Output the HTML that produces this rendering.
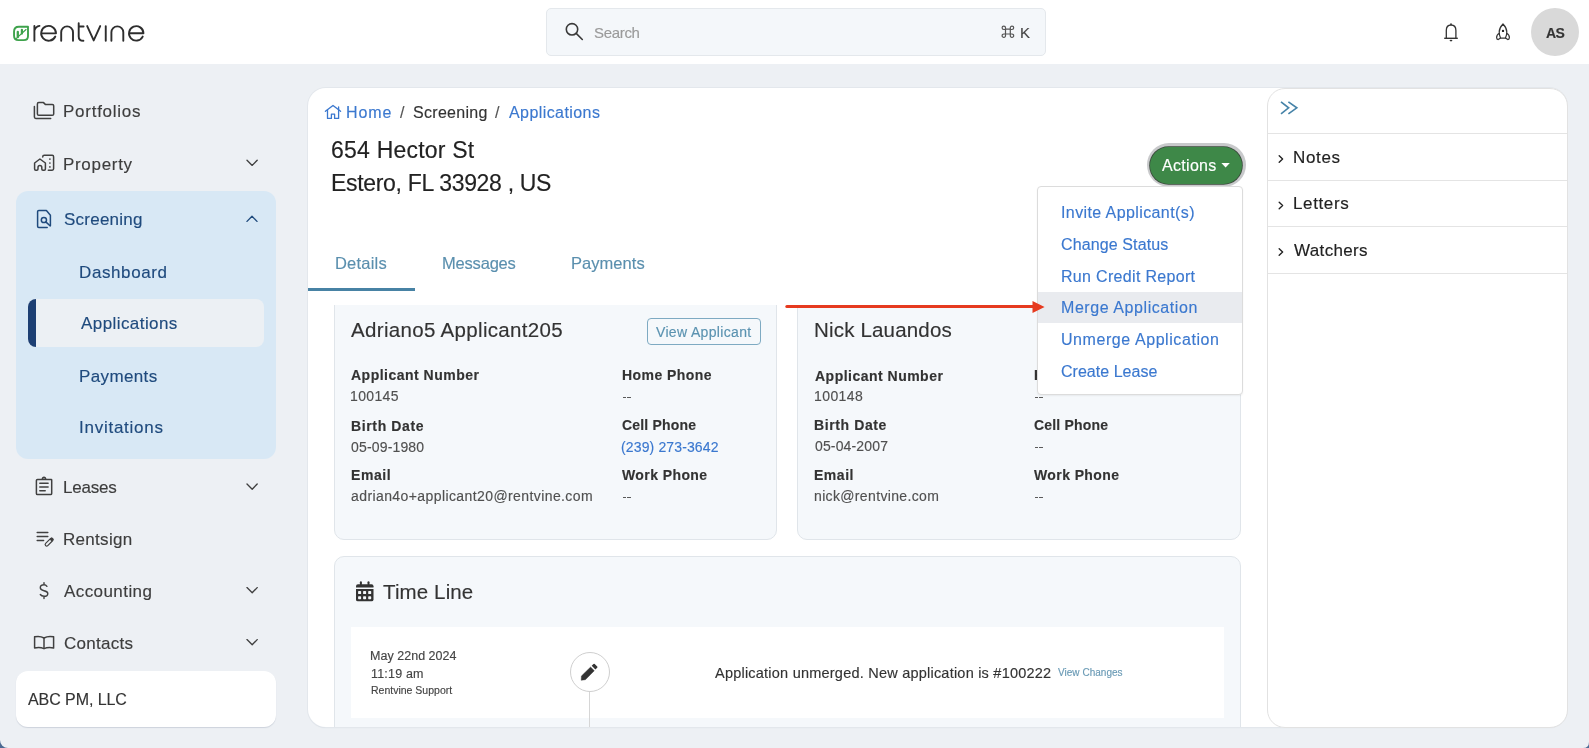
<!DOCTYPE html>
<html><head><meta charset="utf-8">
<style>
html,body{margin:0;padding:0;}
body{width:1589px;height:748px;position:relative;overflow:hidden;background:#edf0f4;font-family:"Liberation Sans",sans-serif;}
.t{position:absolute;white-space:nowrap;will-change:transform;-webkit-text-stroke:0.15px currentColor;font-family:"Liberation Sans",sans-serif;}
.a{position:absolute;}
svg.a{overflow:visible;}
</style></head><body>
<!-- header -->
<div class="a" style="left:0;top:0;width:1589px;height:64px;background:#fff;"></div>
<!-- logo -->
<svg class="a" style="left:0;top:0" width="160" height="64" viewBox="0 0 160 64">
  <g fill="none" stroke="#3ea24c" stroke-linejoin="round" stroke-linecap="round">
    <path d="M28 26.75 V35.9 Q28 40.15 23.75 40.15 H18.4 Q14.05 40.15 14.05 35.8 V31.6 Q14.05 26.75 18.9 26.75 Z" stroke-width="1.9"/>
    <path d="M15.6 39.2 L26 29.5" stroke-width="1.15"/>
    <path d="M17.8 32 V37.2" stroke-width="2.3"/>
    <path d="M21.9 29.8 V33.6" stroke-width="2.2"/>
  </g>
  <g fill="none" stroke="#2e2e2e" stroke-width="1.9" stroke-linecap="round" stroke-linejoin="round">
    <path d="M34.4 25.9 V40.7 M34.4 30.6 Q35.6 26.4 39.5 25.9"/>
    <path d="M41.2 33.35 H56 A7.4 7.4 0 1 0 55.3 36.5"/>
    <path d="M61.2 40.7 V32.3 A5.9 5.9 0 0 1 73 32.3 V40.7"/>
    <path d="M78.7 23.3 V36.4 Q78.7 40.7 83.4 40.7 M78.7 26.5 H83.6"/>
    <path d="M87.2 26.1 L93.7 40.4 L100.2 26.1"/>
    <path d="M105.75 26.1 V40.7"/>
    <path d="M111.4 40.7 V32.35 A5.95 5.95 0 0 1 123.3 32.35 V40.7"/>
    <path d="M129.05 33.3 H143.45 A7.2 7.2 0 1 0 142.7 36.6"/>
  </g>
</svg>
<!-- search box -->
<div class="a" style="left:546px;top:8px;width:498px;height:46px;background:#f4f7fa;border:1px solid #e4e8ec;border-radius:5px;"></div>
<svg class="a" style="left:0;top:0" width="600" height="64">
  <circle cx="572" cy="29.3" r="5.7" fill="none" stroke="#3a3a3a" stroke-width="1.6"/>
  <path d="M576.2 33.4 L582.3 39.5" stroke="#3a3a3a" stroke-width="1.6" stroke-linecap="round"/>
</svg>
<svg class="a" style="left:1000px;top:24px" width="16" height="16" viewBox="0 0 16 16">
  <g fill="none" stroke="#555" stroke-width="1.2">
  <path d="M5.5 5.2 H10.3 V10 H5.5 Z"/>
  <path d="M5.5 5.2 V3.8 A1.7 1.7 0 1 0 3.8 5.5 H5.5"/>
  <path d="M10.3 5.2 V3.8 A1.7 1.7 0 1 1 12 5.5 H10.3"/>
  <path d="M5.5 10 V11.6 A1.7 1.7 0 1 1 3.8 10 H5.5"/>
  <path d="M10.3 10 V11.6 A1.7 1.7 0 1 0 12 10 H10.3"/>
  </g>
</svg>
<!-- bell / rocket -->
<svg class="a" style="left:1430px;top:15px" width="100" height="35" viewBox="1430 15 100 35">
  <g fill="none" stroke="#333" stroke-width="1.3" stroke-linejoin="round">
    <path d="M1446.3 38 V30.5 Q1446.3 25 1451 25 Q1455.9 25 1455.9 30.5 V38"/>
    <path d="M1444.2 38.3 H1457.8" stroke-width="1.4"/>
  </g>
  <circle cx="1451" cy="24.2" r="0.9" fill="#333"/>
  <ellipse cx="1451" cy="40.6" rx="1.4" ry="0.8" fill="#333"/>
  <g fill="none" stroke="#333" stroke-width="1.2" stroke-linejoin="round">
    <path d="M1503 24 Q1506.8 28 1506.8 32 Q1506.8 35.5 1505.4 38.1 H1500.6 Q1499.2 35.5 1499.2 32 Q1499.2 28 1503 24 Z"/>
    <path d="M1499.5 33.2 Q1496.6 34.5 1496.6 37.5 Q1496.6 39.5 1498.2 39.6 L1500.6 38.1"/>
    <path d="M1506.5 33.2 Q1509.4 34.5 1509.4 37.5 Q1509.4 39.5 1507.8 39.6 L1505.4 38.1"/>
  </g>
  <circle cx="1503" cy="30.9" r="1.2" fill="#222"/>
</svg>
<div class="a" style="left:1531px;top:8px;width:48px;height:48px;border-radius:50%;background:#d9d9d9;"></div>

<!-- sidebar -->
<div class="a" style="left:16px;top:191px;width:260px;height:268px;background:#d8e8f5;border-radius:12px;"></div>
<div class="a" style="left:28px;top:299px;width:236px;height:48px;background:#ecf0f4;border-radius:8px;overflow:hidden;"><div class="a" style="left:0;top:0;width:8px;height:48px;background:#1d3f73;"></div></div>
<div class="a" style="left:16px;top:671px;width:260px;height:56px;background:#fff;border-radius:12px;box-shadow:0 1px 1px rgba(60,80,110,0.18);"></div>
<svg class="a" style="left:0;top:64px" width="300" height="684" viewBox="0 64 300 684">
  <g fill="none" stroke="#404040" stroke-width="1.5" stroke-linecap="round" stroke-linejoin="round">
    <!-- folder -->
    <path d="M37.4 104 Q37.4 102.6 38.8 102.6 H43.5 L45.3 104.4 H52.3 Q53.7 104.4 53.7 105.8 V113.9 Q53.7 115.3 52.3 115.3 H38.8 Q37.4 115.3 37.4 113.9 Z"/>
    <path d="M34.4 106.5 V117 Q34.4 118.4 35.8 118.4 H50.7"/>
    <!-- property -->
    <path d="M34.6 169 V163 L39.9 159 L45.4 163 V169 Q45.4 170.2 44.2 170.2 H43 Q41.8 170.2 41.8 169 V167.4 Q41.8 165.6 39.9 165.6 Q38 165.6 38 167.4 V169 Q38 170.2 36.8 170.2 H35.8 Q34.6 170.2 34.6 169 Z"/>
    <path d="M42.7 157 Q42.7 155.3 44.3 155.3 H52.2 Q53.6 155.3 53.6 156.7 V168.8 Q53.6 170.2 52.2 170.2 H48.3"/>
    <!-- leases clipboard -->
    <path d="M37.9 479.4 H51.2 Q51.7 479.4 51.7 480 V493.4 Q51.7 494.5 50.6 494.5 H37.5 Q36.4 494.5 36.4 493.4 V480.5 Q36.4 479.4 37.5 479.4 H42.3 Q42.5 477.2 44 477.2 Q45.5 477.2 45.7 479.4"/>
    <path d="M39.8 483.2 H48.1 M39.8 487 H48.1 M39.8 490.7 H45.2"/>
    <!-- rentsign -->
    <path d="M37.2 532.4 H47.8 M37.2 536.5 H47.8 M37.2 540.4 H43.6"/>
    <g transform="translate(49.1,542.1) rotate(-45)"><rect x="-4.9" y="-1.5" width="9.8" height="3" rx="1.5" stroke-width="1.2"/></g>
    <path d="M44 582.6 V584.8 M44 596.3 V598.6 M46.9 586.3 Q45.9 584.8 44 584.8 Q40.3 584.8 40.3 587.8 Q40.3 589.8 44 590.7 Q47.8 591.6 47.8 593.4 Q47.8 596.3 44 596.3 Q41.5 596.3 40.3 594.5" stroke-width="1.4"/>
    <!-- book -->
    <path d="M44 638 Q40 635.6 34.6 636.8 V648 Q40 647 44 648.6 Q48 647 53.6 648 V636.8 Q48 635.6 44 638 Z"/>
    <path d="M44 638 V648.4"/>
    <!-- chevrons -->
    <g stroke-width="1.35"><path d="M247 160.2 L252.2 165.4 L257.2 160.2"/>
    <path d="M247 484 L252.2 489.2 L257.2 484"/>
    <path d="M247 587.6 L252.2 592.8 L257.2 587.6"/>
    <path d="M247 639.6 L252.2 644.8 L257.2 639.6"/></g>
  </g>
  <g transform="translate(49.1,542.1) rotate(-45)"><rect x="2.2" y="-1.6" width="3.2" height="3.2" rx="1.2" fill="#404040"/></g>
  <g fill="#404040"><circle cx="49.9" cy="159.1" r="0.85"/><circle cx="49.9" cy="163" r="0.85"/><circle cx="49.9" cy="166.9" r="0.85"/></g>
  <g fill="none" stroke="#1f4a7d" stroke-width="1.5" stroke-linecap="round" stroke-linejoin="round">
    <path d="M47.2 227.4 H38.8 Q37.6 227.4 37.6 226.2 V211.6 Q37.6 210.4 38.8 210.4 H46.4 L50.4 215.2 V225.8"/>
    <circle cx="43.9" cy="220" r="2.6"/>
    <path d="M45.8 221.9 L50 225.8"/>
    <path d="M247 221.4 L252 216.2 L257 221.4" stroke-width="1.35"/>
  </g>
  
</svg>

<!-- main white container -->
<div class="a" style="left:308px;top:88px;width:1259px;height:639px;background:#fff;border-radius:18px;box-shadow:0 0 0 1px #e3e7ec, 0 1px 1px rgba(60,80,110,0.15);"></div>
<!-- breadcrumb home icon -->
<svg class="a" style="left:320px;top:100px" width="24" height="24" viewBox="320 100 24 24">
  <g fill="none" stroke="#3b78cf" stroke-width="1.3" stroke-linejoin="round" stroke-linecap="round">
    <path d="M325.4 111.3 L333 105.4 L340.6 111.3"/>
    <path d="M327.5 109.8 V118.4 H331.4 V114.2 H334.6 V118.4 H338.6 V109.8"/>
    <path d="M338.6 107 V109.6"/>
  </g>
</svg>
<!-- tab underline -->
<div class="a" style="left:308px;top:287.5px;width:107px;height:3px;background:#4782a4;"></div>

<!-- content clip -->
<div class="a" style="left:308px;top:305px;width:959px;height:422px;overflow:hidden;">
  <div class="a" style="left:26px;top:-20px;width:441px;height:253px;background:#f5f8fb;border:1px solid #e0e5ea;border-radius:10px;"></div>
  <div class="a" style="left:489px;top:-20px;width:442px;height:253px;background:#f5f8fb;border:1px solid #e0e5ea;border-radius:10px;"></div>
  <div class="a" style="left:338.5px;top:12.5px;width:112px;height:25px;border:1.5px solid #7eaac2;border-radius:4px;"></div>
  <div class="a" style="left:26px;top:250.5px;width:905px;height:200px;background:#f5f8fb;border:1px solid #e0e5ea;border-radius:10px;"></div>
  <div class="a" style="left:43px;top:322px;width:873px;height:91px;background:#fff;"></div>
</div>
<!-- calendar icon -->
<svg class="a" style="left:350px;top:576px" width="30" height="30" viewBox="350 576 30 30">
  <g fill="#333">
    <path d="M356 587.6 V586.2 Q356 584.2 358 584.2 H371.5 Q373.5 584.2 373.5 586.2 V587.6 Z"/>
    <path d="M356 589 H373.5 V599.4 Q373.5 601.3 371.6 601.3 H357.9 Q356 601.3 356 599.4 Z"/>
    <rect x="359.9" y="581.2" width="2" height="4" rx="1"/>
    <rect x="367.5" y="581.2" width="2" height="4" rx="1"/>
  </g>
  <g fill="#f5f8fb">
    <rect x="358.1" y="591.1" width="3" height="3" rx="0.7"/><rect x="363.1" y="591.1" width="3" height="3" rx="0.7"/><rect x="368.2" y="591.1" width="3" height="3" rx="0.7"/>
    <rect x="358.1" y="596.2" width="3" height="3" rx="0.7"/><rect x="363.1" y="596.2" width="3" height="3" rx="0.7"/><rect x="368.2" y="596.2" width="3" height="3" rx="0.7"/>
  </g>
</svg>
<!-- timeline circle + line -->
<div class="a" style="left:589px;top:692px;width:1px;height:35px;background:#d6d6d6;"></div>
<div class="a" style="left:569.8px;top:651.9px;width:38px;height:38px;border:1px solid #cfcfcf;border-radius:50%;background:#fff;"></div>
<svg class="a" style="left:575px;top:658px" width="30" height="30" viewBox="575 658 30 30">
  <path d="M590.6 667 L594.3 670.7 L585.4 679.7 L581.2 680.3 L581.4 676 Z" fill="#333" stroke="#333" stroke-width="0.4" stroke-linejoin="round"/>
  <path d="M591.7 665.8 L593.5 664 Q594.1 663.4 594.7 664 L597.2 666.5 Q597.8 667.1 597.2 667.7 L595.4 669.5 Z" fill="#333"/>
</svg>

<!-- right panel -->
<div class="a" style="left:1267px;top:88px;width:299px;height:638px;background:#fff;border:1px solid #e2e2e2;border-radius:18px;"></div>
<div class="a" style="left:1268px;top:133px;width:299px;height:1px;background:#e4e4e4;"></div>
<div class="a" style="left:1268px;top:179.5px;width:299px;height:1px;background:#e4e4e4;"></div>
<div class="a" style="left:1268px;top:226px;width:299px;height:1px;background:#e4e4e4;"></div>
<div class="a" style="left:1268px;top:272.5px;width:299px;height:1px;background:#e4e4e4;"></div>
<svg class="a" style="left:1270px;top:95px" width="40" height="190" viewBox="1270 95 40 190">
  <g fill="none" stroke="#4683a8" stroke-width="1.65">
    <path d="M1281 101.8 L1288.6 107.8 L1281 113.8"/>
    <path d="M1288.4 101.8 L1296.8 107.8 L1288.4 113.8"/>
  </g>
  <g fill="none" stroke="#222" stroke-width="1.4" stroke-linecap="round" stroke-linejoin="round">
    <path d="M1279.2 155.8 L1282.6 159 L1279.2 162.2"/>
    <path d="M1279.2 202.3 L1282.6 205.5 L1279.2 208.7"/>
    <path d="M1279.2 248.8 L1282.6 252 L1279.2 255.2"/>
  </g>
</svg>

<div class="t" style="left:63.41px;top:102.40px;font-size:17px;line-height:19px;letter-spacing:0.739px;color:#3d3d3d;">Portfolios</div>
<div class="t" style="left:63.11px;top:154.50px;font-size:17px;line-height:19px;letter-spacing:0.684px;color:#3d3d3d;">Property</div>
<div class="t" style="left:63.73px;top:210.10px;font-size:17px;line-height:19px;letter-spacing:0.238px;color:#1f4a7d;">Screening</div>
<div class="t" style="left:79.21px;top:262.50px;font-size:17px;line-height:19px;letter-spacing:0.602px;color:#1f4a7d;">Dashboard</div>
<div class="t" style="left:80.57px;top:314.40px;font-size:17px;line-height:19px;letter-spacing:0.426px;color:#1f4a7d;">Applications</div>
<div class="t" style="left:79.21px;top:366.60px;font-size:17px;line-height:19px;letter-spacing:0.375px;color:#1f4a7d;">Payments</div>
<div class="t" style="left:79.04px;top:418.20px;font-size:17px;line-height:19px;letter-spacing:0.744px;color:#1f4a7d;">Invitations</div>
<div class="t" style="left:63.31px;top:477.90px;font-size:17px;line-height:19px;letter-spacing:-0.224px;color:#3d3d3d;">Leases</div>
<div class="t" style="left:63.31px;top:529.80px;font-size:17px;line-height:19px;letter-spacing:0.300px;color:#3d3d3d;">Rentsign</div>
<div class="t" style="left:64.47px;top:581.70px;font-size:17px;line-height:19px;letter-spacing:0.423px;color:#3d3d3d;">Accounting</div>
<div class="t" style="left:63.63px;top:633.80px;font-size:17px;line-height:19px;letter-spacing:0.271px;color:#3d3d3d;">Contacts</div>
<div class="t" style="left:28.07px;top:691.20px;font-size:16px;line-height:17px;letter-spacing:-0.074px;color:#333;">ABC PM, LLC</div>
<div class="t" style="left:594.33px;top:23.70px;font-size:15px;line-height:17px;letter-spacing:-0.314px;color:#9a9a9a;">Search</div>
<div class="t" style="left:1019.67px;top:23.80px;font-size:15px;line-height:17px;letter-spacing:0.000px;color:#444;">K</div>
<div class="t" style="left:1545.65px;top:24.50px;font-size:14px;line-height:16px;letter-spacing:-0.550px;color:#333;font-weight:700;">AS</div>
<div class="t" style="left:345.69px;top:103.80px;font-size:16px;line-height:17px;letter-spacing:0.881px;color:#3b78cf;">Home</div>
<div class="t" style="left:399.70px;top:103.80px;font-size:16px;line-height:17px;letter-spacing:0.000px;color:#555;">/</div>
<div class="t" style="left:412.68px;top:103.80px;font-size:16px;line-height:17px;letter-spacing:0.300px;color:#333;">Screening</div>
<div class="t" style="left:495.20px;top:103.80px;font-size:16px;line-height:17px;letter-spacing:0.000px;color:#555;">/</div>
<div class="t" style="left:508.87px;top:103.80px;font-size:16px;line-height:17px;letter-spacing:0.421px;color:#3b78cf;">Applications</div>
<div class="t" style="left:331.43px;top:136.60px;font-size:23px;line-height:26px;letter-spacing:0.218px;color:#222;">654 Hector St</div>
<div class="t" style="left:330.71px;top:169.90px;font-size:23px;line-height:26px;letter-spacing:-0.313px;color:#222;">Estero, FL 33928 , US</div>
<div class="t" style="left:335.35px;top:254.00px;font-size:16.5px;line-height:18px;letter-spacing:0.201px;color:#5a8fae;">Details</div>
<div class="t" style="left:442.15px;top:253.90px;font-size:16.5px;line-height:18px;letter-spacing:-0.194px;color:#5a8fae;">Messages</div>
<div class="t" style="left:571.15px;top:253.90px;font-size:16.5px;line-height:18px;letter-spacing:0.041px;color:#5a8fae;">Payments</div>
<div class="t" style="left:351.26px;top:318.20px;font-size:20.5px;line-height:23px;letter-spacing:0.327px;color:#333;">Adriano5 Applicant205</div>
<div class="t" style="left:656.04px;top:323.50px;font-size:14px;line-height:16px;letter-spacing:0.335px;color:#5a92b0;">View Applicant</div>
<div class="t" style="left:350.95px;top:367.40px;font-size:14px;line-height:16px;letter-spacing:0.493px;color:#333;font-weight:700;">Applicant Number</div>
<div class="t" style="left:350.24px;top:388.40px;font-size:14px;line-height:16px;letter-spacing:0.367px;color:#505050;">100145</div>
<div class="t" style="left:350.56px;top:417.50px;font-size:14px;line-height:16px;letter-spacing:0.636px;color:#333;font-weight:700;">Birth Date</div>
<div class="t" style="left:350.95px;top:438.70px;font-size:14px;line-height:16px;letter-spacing:0.165px;color:#505050;">05-09-1980</div>
<div class="t" style="left:350.56px;top:467.40px;font-size:14px;line-height:16px;letter-spacing:0.545px;color:#333;font-weight:700;">Email</div>
<div class="t" style="left:350.91px;top:487.90px;font-size:14px;line-height:16px;letter-spacing:0.406px;color:#505050;">adrian4o+applicant20@rentvine.com</div>
<div class="t" style="left:621.56px;top:367.30px;font-size:14px;line-height:16px;letter-spacing:0.450px;color:#333;font-weight:700;">Home Phone</div>
<div class="t" style="left:621.53px;top:417.20px;font-size:14px;line-height:16px;letter-spacing:0.190px;color:#333;font-weight:700;">Cell Phone</div>
<div class="t" style="left:621.23px;top:438.60px;font-size:14px;line-height:16px;letter-spacing:0.134px;color:#3b78cf;">(239) 273-3642</div>
<div class="t" style="left:622.09px;top:467.30px;font-size:14px;line-height:16px;letter-spacing:0.409px;color:#333;font-weight:700;">Work Phone</div>
<div class="t" style="left:813.52px;top:317.90px;font-size:20.5px;line-height:23px;letter-spacing:0.176px;color:#333;">Nick Lauandos</div>
<div class="t" style="left:814.85px;top:367.60px;font-size:14px;line-height:16px;letter-spacing:0.486px;color:#333;font-weight:700;">Applicant Number</div>
<div class="t" style="left:814.14px;top:388.40px;font-size:14px;line-height:16px;letter-spacing:0.410px;color:#505050;">100148</div>
<div class="t" style="left:814.26px;top:417.40px;font-size:14px;line-height:16px;letter-spacing:0.602px;color:#333;font-weight:700;">Birth Date</div>
<div class="t" style="left:814.65px;top:438.40px;font-size:14px;line-height:16px;letter-spacing:0.148px;color:#505050;">05-04-2007</div>
<div class="t" style="left:814.26px;top:467.30px;font-size:14px;line-height:16px;letter-spacing:0.520px;color:#333;font-weight:700;">Email</div>
<div class="t" style="left:814.28px;top:488.00px;font-size:14px;line-height:16px;letter-spacing:0.350px;color:#505050;">nick@rentvine.com</div>
<div class="t" style="left:1033.66px;top:367.30px;font-size:14px;line-height:16px;letter-spacing:0.450px;color:#333;font-weight:700;">Home Phone</div>
<div class="t" style="left:1033.83px;top:417.20px;font-size:14px;line-height:16px;letter-spacing:0.190px;color:#333;font-weight:700;">Cell Phone</div>
<div class="t" style="left:1034.39px;top:467.30px;font-size:14px;line-height:16px;letter-spacing:0.398px;color:#333;font-weight:700;">Work Phone</div>
<div class="t" style="left:383.35px;top:580.20px;font-size:20.5px;line-height:23px;letter-spacing:0.127px;color:#333;">Time Line</div>
<div class="t" style="left:370.48px;top:649.00px;font-size:12.5px;line-height:14px;letter-spacing:0.026px;color:#444;">May 22nd 2024</div>
<div class="t" style="left:370.55px;top:667.00px;font-size:12.5px;line-height:14px;letter-spacing:0.184px;color:#444;">11:19 am</div>
<div class="t" style="left:370.64px;top:683.70px;font-size:10.5px;line-height:12px;letter-spacing:0.000px;color:#444;">Rentvine Support</div>
<div class="t" style="left:715.37px;top:664.60px;font-size:14.5px;line-height:16px;letter-spacing:0.223px;color:#333;">Application unmerged. New application is #100222</div>
<div class="t" style="left:1057.66px;top:666.90px;font-size:10px;line-height:11px;letter-spacing:0.027px;color:#6a9ab5;">View Changes</div>
<div class="a" style="left:622.8px;top:396.8px;width:3px;height:1.3px;background:#5a5a5a;"></div><div class="a" style="left:627.0px;top:396.8px;width:3.6px;height:1.3px;background:#5a5a5a;"></div>
<div class="a" style="left:622.8px;top:496.7px;width:3px;height:1.3px;background:#5a5a5a;"></div><div class="a" style="left:627.0px;top:496.7px;width:3.6px;height:1.3px;background:#5a5a5a;"></div>
<div class="a" style="left:1034.9px;top:396.8px;width:3px;height:1.3px;background:#5a5a5a;"></div><div class="a" style="left:1039.1px;top:396.8px;width:3.6px;height:1.3px;background:#5a5a5a;"></div>
<div class="a" style="left:1034.9px;top:446.9px;width:3px;height:1.3px;background:#5a5a5a;"></div><div class="a" style="left:1039.1px;top:446.9px;width:3.6px;height:1.3px;background:#5a5a5a;"></div>
<div class="a" style="left:1034.9px;top:496.7px;width:3px;height:1.3px;background:#5a5a5a;"></div><div class="a" style="left:1039.1px;top:496.7px;width:3.6px;height:1.3px;background:#5a5a5a;"></div>
<div class="t" style="left:1292.51px;top:147.80px;font-size:17px;line-height:19px;letter-spacing:0.675px;color:#222;">Notes</div>
<div class="t" style="left:1292.51px;top:194.30px;font-size:17px;line-height:19px;letter-spacing:0.623px;color:#222;">Letters</div>
<div class="t" style="left:1293.83px;top:240.80px;font-size:17px;line-height:19px;letter-spacing:0.345px;color:#222;">Watchers</div>
<!-- actions button -->
<div class="a" style="left:1146.6px;top:143.4px;width:99px;height:43.8px;border-radius:22px;background:#c8c9cb;"></div>
<div class="a" style="left:1149.8px;top:146.6px;width:92.6px;height:37.4px;border-radius:19px;background:#3e8848;box-shadow:0 0 0 0.8px #3b4a3d;"></div>
<svg class="a" style="left:1218px;top:160px" width="14" height="10" viewBox="1218 160 14 10">
  <path d="M1221.4 163 H1229.8 L1225.6 167.4 Z" fill="#fff"/>
</svg>

<!-- dropdown -->
<div class="a" style="left:1036.5px;top:186.2px;width:204.5px;height:207.1px;background:#fff;border:1px solid #dcdcdc;border-radius:4px;box-shadow:0 1px 2px rgba(0,0,0,0.06);"></div>
<div class="a" style="left:1037.5px;top:291.8px;width:204.5px;height:31.2px;background:#e9ebef;"></div>

<div class="t" style="left:1162.47px;top:157.30px;font-size:16px;line-height:17px;letter-spacing:0.307px;color:#fff;">Actions</div>
<div class="t" style="left:1060.83px;top:203.90px;font-size:16px;line-height:17px;letter-spacing:0.399px;color:#3b78cf;">Invite Applicant(s)</div>
<div class="t" style="left:1061.48px;top:235.70px;font-size:16px;line-height:17px;letter-spacing:0.120px;color:#3b78cf;">Change Status</div>
<div class="t" style="left:1060.99px;top:267.60px;font-size:16px;line-height:17px;letter-spacing:0.318px;color:#3b78cf;">Run Credit Report</div>
<div class="t" style="left:1060.99px;top:299.30px;font-size:16px;line-height:17px;letter-spacing:0.573px;color:#3b78cf;">Merge Application</div>
<div class="t" style="left:1061.07px;top:331.20px;font-size:16px;line-height:17px;letter-spacing:0.569px;color:#3b78cf;">Unmerge Application</div>
<div class="t" style="left:1061.48px;top:363.10px;font-size:16px;line-height:17px;letter-spacing:0.023px;color:#3b78cf;">Create Lease</div>
<!-- red arrow -->
<svg class="a" style="left:780px;top:295px" width="270" height="25" viewBox="780 295 270 25">
  <path d="M786.8 306.5 H1034" stroke="#e63a1f" stroke-width="3" stroke-linecap="round"/>
  <path d="M1032.5 301 L1044.6 307 L1032.5 313 Z" fill="#e63a1f"/>
</svg>

<!-- window corners -->
<svg class="a" style="left:1579px;top:738px" width="10" height="10" viewBox="0 0 10 10"><path d="M10 4 Q10 10 4 10 H10 Z" fill="#4b6a93"/></svg>
<div class="a" style="left:0;top:740px;width:8px;height:8px;background:#4b6a93;"></div>
<div class="a" style="left:0;top:732px;width:16px;height:16px;background:#edf0f4;border-bottom-left-radius:8px;"></div>

</body></html>
